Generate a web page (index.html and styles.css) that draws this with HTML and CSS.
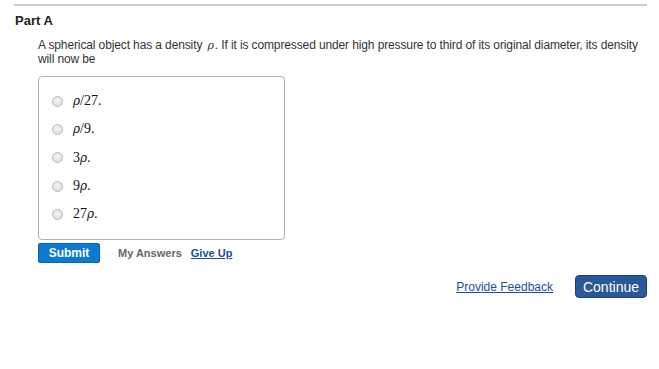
FILE: index.html
```html
<!DOCTYPE html>
<html lang="en">
<head>
    <meta charset="UTF-8">
    <title>Part A</title>
    <link rel="stylesheet" href="styles.css">
</head>
<body>
    <div class="part">
        <h2 class="part-title">Part A</h2>
        <div class="question">
            <p class="prompt">A spherical object has a density <span class="rho">ρ</span>. If it is compressed under high pressure to third of its original diameter, its density<br>will now be</p>

            <div class="choices">
                <label class="choice"><input type="radio" name="ans"><span class="math"><i>ρ</i>/27.</span></label>
                <label class="choice"><input type="radio" name="ans"><span class="math"><i>ρ</i>/9.</span></label>
                <label class="choice"><input type="radio" name="ans"><span class="math">3<i>ρ</i>.</span></label>
                <label class="choice"><input type="radio" name="ans"><span class="math">9<i>ρ</i>.</span></label>
                <label class="choice"><input type="radio" name="ans"><span class="math">27<i>ρ</i>.</span></label>
            </div>

            <div class="actions">
                <button class="submit-btn">Submit</button>
                <span class="my-answers">My Answers</span>
                <a href="#" class="give-up">Give Up</a>
            </div>
        </div>
    </div>

    <div class="footer">
        <a href="#" class="feedback">Provide Feedback</a>
        <button class="continue-btn">Continue</button>
    </div>
</body>
</html>
```

FILE: styles.css
```css
body {
    margin: 0;
    padding: 4px 12px 0 14px;
    font-family: Arial, "Liberation Sans", sans-serif;
    color: #333;
    background: #fff;
}
.part {
    border-top: 2px solid #ccc;
}
.part-title {
    margin: 0;
    padding: 7px 0 0 1px;
    font-size: 13px;
    font-weight: bold;
    color: #222;
    line-height: 16px;
}
.question {
    padding-left: 24px;
}
.prompt {
    margin: 9px 0 0;
    font-size: 12px;
    line-height: 14px;
    color: #333;
    white-space: nowrap;
    letter-spacing: -0.12px;
}
.rho {
    display: inline-block;
    font-family: "DejaVu Serif", serif;
    font-style: italic;
    font-size: 11px;
    line-height: 12px;
    margin: 0 1px 0 2px;
}
.choices {
    margin-top: 10px;
    width: 247px;
    height: 164px;
    border: 1px solid #b0b0b0;
    border-radius: 4px;
    padding-top: 10px;
    box-sizing: border-box;
}
.choice {
    display: flex;
    align-items: center;
    height: 28.3px;
    padding-left: 13px;
}
.choice input {
    appearance: none;
    margin: 0;
    width: 11px;
    height: 11px;
    border: 1px solid #b8b8b8;
    border-radius: 50%;
    background: radial-gradient(circle at 50% 40%, #f4f4f4, #d8d8d8);
}
.math {
    margin-left: 10px;
    font-family: "Liberation Serif", serif;
    font-size: 14px;
    color: #111;
}
.math i {
    font-family: "DejaVu Serif", serif;
    font-size: 12px;
}
.actions {
    display: flex;
    align-items: center;
    margin-top: 3px;
}
.submit-btn {
    background: #0d7ad0;
    color: #fff;
    border: 1px solid #0a66b0;
    border-radius: 2px;
    font-family: Arial, "Liberation Sans", sans-serif;
    font-size: 12px;
    font-weight: bold;
    width: 62px;
    height: 20px;
    padding: 0;
}
.my-answers {
    margin-left: 18px;
    font-size: 11px;
    font-weight: bold;
    color: #666;
}
.give-up {
    margin-left: 9px;
    font-size: 11px;
    font-weight: bold;
    color: #1a4f9c;
}
.footer {
    display: flex;
    justify-content: flex-end;
    align-items: center;
    margin-top: 12px;
}
.feedback {
    font-size: 12px;
    color: #1a4f9c;
}
.continue-btn {
    margin-left: 22px;
    background: #2b5897;
    color: #fff;
    border: 1px solid #1d3f70;
    border-radius: 4px;
    font-family: Arial, "Liberation Sans", sans-serif;
    font-size: 14px;
    width: 72px;
    height: 23px;
    padding: 0;
}
```
